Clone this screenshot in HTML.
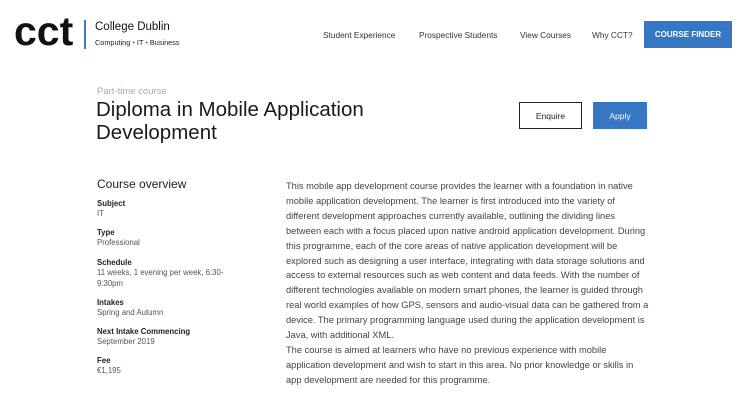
<!DOCTYPE html>
<html><head><meta charset="utf-8"><style>
*{margin:0;padding:0;box-sizing:border-box}
body{width:750px;height:400px;overflow:hidden;background:#fff;font-family:"Liberation Sans",sans-serif;color:#222;position:relative}
.a{position:absolute;white-space:nowrap}
.nav{font-size:8.3px;color:#333;top:30px}
.btn{position:absolute;display:flex;align-items:center;justify-content:center;font-size:8.5px}
.body{left:286px;top:179px;font-size:9.3px;line-height:14.9px;color:#444}
.ov{left:97px;font-size:7.8px}
.ov b{display:block;color:#222;font-weight:bold}
.ov span{display:block;color:#555;line-height:11px}
</style></head><body>
<div class="a" style="left:14px;top:8px;font-size:41px;font-weight:bold;letter-spacing:0px;color:#111;line-height:46px">cct</div>
<div class="a" style="left:84px;top:20px;width:2px;height:29px;background:#3a7bc8"></div>
<div class="a" style="left:95px;top:21px;font-size:11.5px;color:#111">College Dublin</div>
<div class="a" style="left:95px;top:38px;font-size:7.3px;color:#222">Computing <span style="color:#3a7bc8">•</span> IT <span style="color:#3a7bc8">•</span> Business</div>
<div class="a nav" style="left:323px">Student Experience</div>
<div class="a nav" style="left:419px">Prospective Students</div>
<div class="a nav" style="left:520px">View Courses</div>
<div class="a nav" style="left:592px">Why CCT?</div>
<div class="btn" style="left:644px;top:21px;width:88px;height:27px;background:#3677c3;color:#fff;font-weight:bold;font-size:8px">COURSE FINDER</div>
<div class="a" style="left:97px;top:86px;font-size:9.5px;color:#aaa">Part-time course</div>
<div class="a" style="left:96px;top:98px;font-size:20.5px;line-height:23px;color:#1a1a1a">Diploma in Mobile Application<br>Development</div>
<div class="btn" style="left:519px;top:102px;width:63px;height:27px;border:1.5px solid #222;color:#222">Enquire</div>
<div class="btn" style="left:593px;top:102px;width:54px;height:27px;background:#3677c3;color:#fff">Apply</div>
<div class="a" style="left:97px;top:177px;font-size:12px;color:#222">Course overview</div>
<div class="a ov" style="top:199px"><b>Subject</b><span>IT</span></div>
<div class="a ov" style="top:228px"><b>Type</b><span>Professional</span></div>
<div class="a ov" style="top:258px"><b>Schedule</b><span>11 weeks, 1 evening per week, 6:30-<br>9:30pm</span></div>
<div class="a ov" style="top:298px"><b>Intakes</b><span>Spring and Autumn</span></div>
<div class="a ov" style="top:327px"><b>Next Intake Commencing</b><span>September 2019</span></div>
<div class="a ov" style="top:356px"><b>Fee</b><span>€1,195</span></div>
<div class="a body">This mobile app development course provides the learner with a foundation in native<br>mobile application development. The learner is first introduced into the variety of<br>different development approaches currently available, outlining the dividing lines<br>between each with a focus placed upon native android application development. During<br>this programme, each of the core areas of native application development will be<br>explored such as designing a user interface, integrating with data storage solutions and<br>access to external resources such as web content and data feeds. With the number of<br>different technologies available on modern smart phones, the learner is guided through<br>real world examples of how GPS, sensors and audio-visual data can be gathered from a<br>device. The primary programming language used during the application development is<br>Java, with additional XML.<br>The course is aimed at learners who have no previous experience with mobile<br>application development and wish to start in this area. No prior knowledge or skills in<br>app development are needed for this programme.</div>
</body></html>
